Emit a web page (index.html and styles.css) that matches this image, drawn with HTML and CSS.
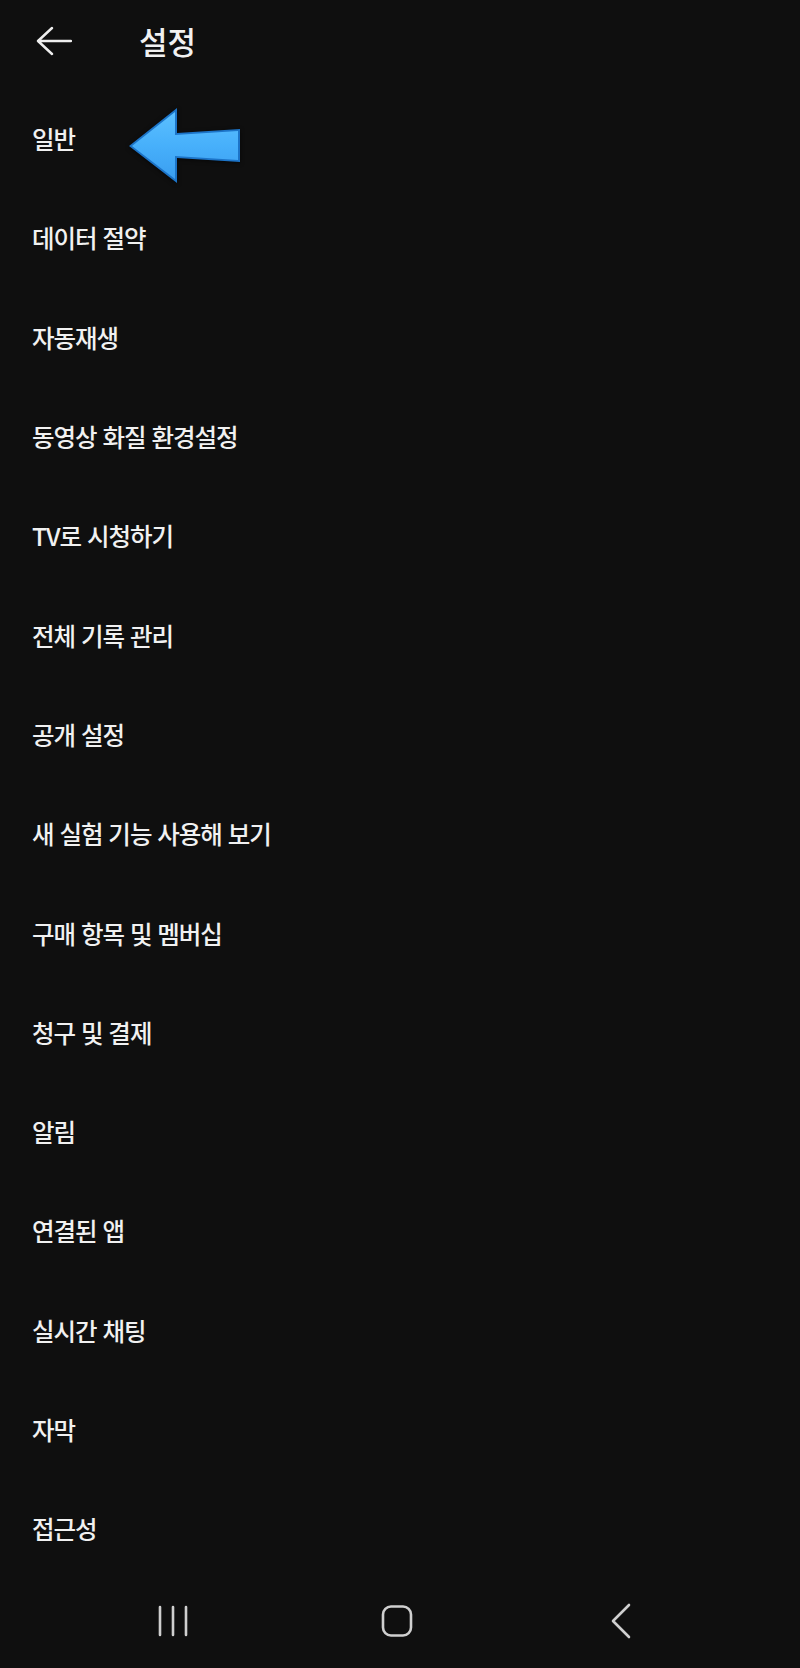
FILE: index.html
```html
<!DOCTYPE html>
<html lang="ko">
<head>
    <meta charset="UTF-8">
    <meta name="viewport" content="width=device-width, initial-scale=1.0">
    <title>설정</title>
    <link rel="stylesheet" href="styles.css">
</head>
<body>
    <header class="top-bar">
        <button class="back-button" aria-label="뒤로">
            <svg width="36" height="30" viewBox="0 0 36 30">
                <path d="M35 15 H3 M16 2 L2 15 L16 28" fill="none" stroke="#eeeeee" stroke-width="2.4" stroke-linecap="round" stroke-linejoin="round"/>
            </svg>
        </button>
        <h1 class="title">설정</h1>
    </header>
    <main class="settings">
        <ul class="settings-list">
            <li class="settings-item">일반
                <!-- 강조 화살표 -->
                <svg class="pointer" width="114" height="78" viewBox="0 0 114 78">
                    <defs>
                        <linearGradient id="arrowFill" x1="0" y1="0" x2="0" y2="1">
                            <stop offset="0" stop-color="#5cc0ff"/>
                            <stop offset="0.5" stop-color="#47b0fb"/>
                            <stop offset="1" stop-color="#3a9ef0"/>
                        </linearGradient>
                    </defs>
                    <path d="M2 41 L50 3 L50 28 L113 24 L113 57 L50 53 L50 78 Z" fill="#1c74c8"/>
                    <path d="M5 41 L48 7 L48 30 L111 26 L111 55 L48 51 L48 74 Z" fill="url(#arrowFill)"/>
                </svg>
            </li>
            <li class="settings-item">데이터 절약</li>
            <li class="settings-item">자동재생</li>
            <li class="settings-item">동영상 화질 환경설정</li>
            <li class="settings-item">TV로 시청하기</li>
            <li class="settings-item">전체 기록 관리</li>
            <li class="settings-item">공개 설정</li>
            <li class="settings-item">새 실험 기능 사용해 보기</li>
            <li class="settings-item">구매 항목 및 멤버십</li>
            <li class="settings-item">청구 및 결제</li>
            <li class="settings-item">알림</li>
            <li class="settings-item">연결된 앱</li>
            <li class="settings-item">실시간 채팅</li>
            <li class="settings-item">자막</li>
            <li class="settings-item">접근성</li>
        </ul>
    </main>
    <nav class="nav-bar">
        <span class="nav-key">
            <svg width="32" height="34" viewBox="0 0 32 34">
                <path d="M3 3 V31 M16 3 V31 M29 3 V31" stroke="#cfcfcf" stroke-width="2.6" stroke-linecap="round"/>
            </svg>
        </span>
        <span class="nav-key">
            <svg width="34" height="34" viewBox="0 0 34 34">
                <rect x="3" y="2.5" width="28" height="29" rx="8" fill="none" stroke="#cfcfcf" stroke-width="2.6"/>
            </svg>
        </span>
        <span class="nav-key">
            <svg width="24" height="36" viewBox="0 0 24 36">
                <path d="M20 2 L4 18 L20 34" fill="none" stroke="#cfcfcf" stroke-width="2.6" stroke-linecap="round" stroke-linejoin="round"/>
            </svg>
        </span>
    </nav>
</body>
</html>
```

FILE: styles.css
```css
body {
    margin: 0;
    padding: 0;
    background-color: #0f0f0f;
    color: #f1f1f1;
    font-family: "Noto Sans CJK KR", "Noto Sans", sans-serif;
    height: 1668px;
    display: flex;
    flex-direction: column;
    overflow: hidden;
}
.top-bar {
    height: 89px;
    display: flex;
    align-items: center;
    padding-left: 36px;
    flex-shrink: 0;
}
.back-button {
    background: none;
    border: none;
    padding: 0;
    display: flex;
    margin-top: -8px;
}
.title {
    margin: -8px 0 0 67px;
    font-size: 31px;
    font-weight: 500;
    letter-spacing: 0;
}
.settings {
    flex: 1;
    overflow: hidden;
}
.settings-list {
    list-style: none;
    margin: 0;
    padding: 0;
}
.settings-item {
    position: relative;
    height: 99.3px;
    display: flex;
    align-items: center;
    padding-left: 32px;
    font-size: 24.5px;
    font-weight: 500;
    letter-spacing: -1px;
}
.pointer {
    position: absolute;
    left: 127px;
    top: 16px;
    filter: drop-shadow(0 1px 2px rgba(0, 0, 0, 0.6));
}
.nav-bar {
    height: 94px;
    flex-shrink: 0;
    display: flex;
    justify-content: center;
    align-items: center;
    gap: 124px;
    padding-right: 6px;
    background-color: #0f0f0f;
}
.nav-key {
    width: 100px;
    display: flex;
    justify-content: center;
}
```
